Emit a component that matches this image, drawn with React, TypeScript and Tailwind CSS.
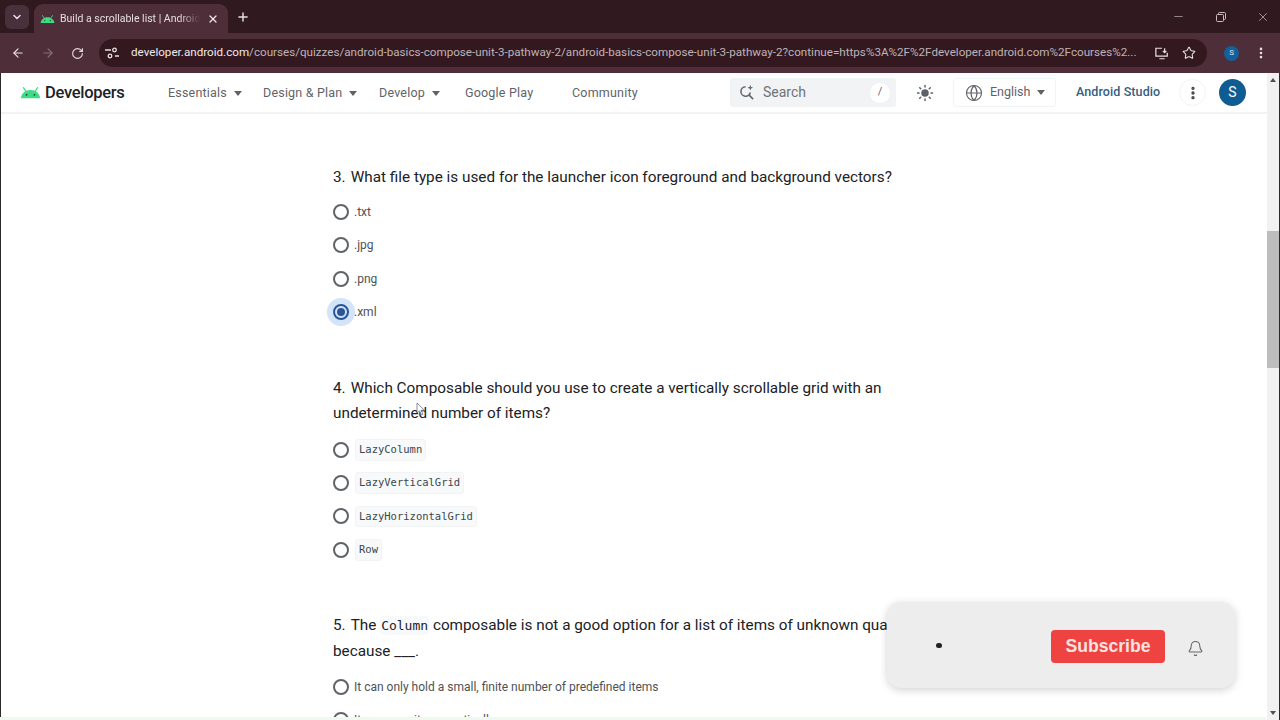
import React from 'react';
import { ArrowLeft, ArrowRight, RotateCw, Plus, X, ChevronDown, Star, MoreVertical, Globe, Minus, Bell, Sun } from 'lucide-react';

const AndroidLogo: React.FC<{ className?: string }> = ({ className }) => (
  <svg viewBox="0 0 24 14" className={className}>
    <path d="M1 13.5C1.6 8 6 4 12 4s10.400 4 11 9.500z" fill="#3ddc84" />
    <path d="M6.500 5.500 4 1.500M17.500 5.500 20 1.500" stroke="#3ddc84" strokeWidth="1.400" strokeLinecap="round" />
    <circle cx="7.500" cy="9.600" r="1" fill="#1f3a2a" />
    <circle cx="16.500" cy="9.600" r="1" fill="#1f3a2a" />
  </svg>
);

const Caret = () => <span className="ml-[7px] inline-block w-0 h-0 border-x-[4.5px] border-x-transparent border-t-[5px] border-t-[#5f6368]" />;

const NavItem: React.FC<{ label: string; caret?: boolean; width: string }> = ({ label, caret, width }) => (
  <div className={`flex items-center pt-[2px] text-[12.5px] tracking-[0.2px] text-[#5f6368] ${width}`}>
    {label}
    {caret && <Caret />}
  </div>
);

const Radio: React.FC<{ checked?: boolean }> = ({ checked }) => (
  <span className="relative flex-none w-[16px] h-[16px] rounded-full border-2 border-[#5f6368] flex items-center justify-center">
    {checked && (
      <>
        <span className="absolute -inset-[8px] rounded-full bg-[#d3e3f8]" />
        <span className="absolute -inset-[2px] rounded-full border-2 border-[#2a5699]" />
        <span className="relative w-[8px] h-[8px] rounded-full bg-[#2a5699]" />
      </>
    )}
  </span>
);

const Option: React.FC<{ label: string; code?: boolean; checked?: boolean }> = ({ label, code, checked }) => (
  <div className="flex items-center h-[17px] mb-[16.4px]">
    <Radio checked={checked} />
    {code ? (
      <code className="relative ml-[6px] px-[3px] py-[2px] rounded-[3px] bg-[#f8f9fa] border border-[#f1f3f4] text-[10.5px] text-[#37474f] font-['DejaVu_Sans_Mono',monospace]">{label}</code>
    ) : (
      <span className="relative ml-[5px] text-[12px] text-[#4e5256]">{label}</span>
    )}
  </div>
);

const Question: React.FC<{ n: number; children: React.ReactNode; className?: string }> = ({ n, children, className }) => (
  <h3 className={`text-[15.3px] leading-[25.5px] font-normal text-[#202124] ${className ?? ''}`}>
    <span className="mr-[5px]">{n}.</span>
    {children}
  </h3>
);

export default function App() {
  return (
    <div className="relative w-[1280px] h-[720px] overflow-hidden flex flex-col bg-white font-['Roboto',sans-serif]">
      {/* tab strip */}
      <div className="h-[33px] flex-none bg-[#30191f] flex items-end">
        <div className="w-[24px] h-[24px] ml-[5px] mb-[4px] rounded-md bg-[#49303a] flex items-center justify-center text-[#e8dfe2]">
          <ChevronDown size={12} strokeWidth={3} />
        </div>
        <div className="ml-[5px] w-[194px] h-[29px] rounded-t-[9px] bg-[#4e2f39] flex items-center pl-[6px] pr-[9px]">
          <AndroidLogo className="w-[15px] h-[10px] flex-none" />
          <span className="ml-[5px] w-[140px] text-[10.5px] text-[#e6dde0] whitespace-nowrap overflow-hidden [mask-image:linear-gradient(to_right,black_85%,transparent)]">Build a scrollable list | Android</span>
          <X size={12} strokeWidth={2.5} className="ml-auto text-[#eee6e9]" />
        </div>
        <Plus size={14} strokeWidth={2.5} className="ml-[8px] mb-[9px] text-[#e8dfe2]" />
        <div className="ml-auto flex items-center h-[33px] text-[#c9bfc3]">
          <Minus size={13} strokeWidth={1.2} className="mr-[31px]" />
          <svg viewBox="0 0 10 10" className="w-[10px] h-[10px] mr-[30px]" fill="none" stroke="currentColor" strokeWidth="1"><rect x="0.5" y="2.5" width="7" height="7" rx="1" /><path d="M2.500 2.500V1.500a1 1 0 0 1 1-1h5a1 1 0 0 1 1 1v5a1 1 0 0 1-1 1H7.500" /></svg>
          <X size={14} strokeWidth={1.2} className="mr-[10px]" />
        </div>
      </div>
      {/* toolbar */}
      <div className="h-[40px] flex-none bg-[#4e2f39] flex items-center text-[#e8dfe2]">
        <ArrowLeft size={14} strokeWidth={2} className="ml-[11px] flex-none" />
        <ArrowRight size={14} strokeWidth={2} className="ml-[16px] flex-none text-[#86707a]" />
        <RotateCw size={13} strokeWidth={2} className="ml-[16px] flex-none" />
        <div className="ml-[15px] w-[1108px] h-[28px] flex-none rounded-full bg-[#33191f] flex items-center">
          <svg viewBox="0 0 14 12" className="ml-[6px] w-[14px] h-[12px] flex-none" fill="none" stroke="#e8dfe2" strokeWidth="1.3"><path d="M0 3h6M10 9h4" /><circle cx="9.500" cy="3" r="1.800" /><circle cx="5" cy="9" r="1.800" /></svg>
          <span className="ml-[12px] w-[1012px] flex-none text-[11.65px] whitespace-nowrap text-[#bfb3b7]">
            <span className="text-[#f0e9eb]">developer.android.com</span>/courses/quizzes/android-basics-compose-unit-3-pathway-2/android-basics-compose-unit-3-pathway-2?continue=https%3A%2F%2Fdeveloper.android.com%2Fcourses%2...
          </span>
          <svg viewBox="0 0 16 14" className="ml-[12px] w-[14px] h-[13px] flex-none" fill="none" stroke="#e8dfe2" strokeWidth="1.400"><path d="M8 1H1v9h13V6M5 13h6M11 1v5M9 4l2 2 2-2" /></svg>
          <Star size={14} strokeWidth={1.8} className="ml-[13px] flex-none" />
        </div>
        <div className="ml-[17px] w-[15px] h-[15px] flex-none rounded-full bg-[#14609c] flex items-center justify-center text-[8px] text-[#dbe8f3]">S</div>
        <MoreVertical size={14} strokeWidth={2.5} className="ml-[15px] flex-none" />
      </div>
      <div className="flex-1 flex min-h-0">
        <div className="flex-1 min-w-0 flex flex-col border-l border-[#2a2a2a]">
          {/* site header */}
          <div className="h-[41px] flex-none flex items-center border-b-2 border-[#f1f3f4]">
            <AndroidLogo className="ml-[19px] w-[21px] h-[13px]" />
            <span className="ml-[4px] pt-[1px] text-[16.5px] font-medium tracking-[-0.3px] text-[#202124] w-[123px]">Developers</span>
            <NavItem label="Essentials" caret width="w-[95px]" />
            <NavItem label="Design & Plan" caret width="w-[116px]" />
            <NavItem label="Develop" caret width="w-[86px]" />
            <NavItem label="Google Play" width="w-[107px]" />
            <NavItem label="Community" width="w-[158px]" />
            <div className="w-[166px] h-[29px] flex items-center bg-[#f1f3f4] rounded-[3px]">
              <svg viewBox="0 0 18 18" className="ml-[8px] w-[17px] h-[17px]" fill="none" stroke="#5f6368" strokeWidth="1.6"><path d="M8 3a5 5 0 1 0 5 6M11 11l5 5" /><path d="M13 1l.8 2.200L16 4l-2.200.8L13 7l-.8-2.200L10 4l2.200-.8z" fill="#5f6368" stroke="none" /></svg>
              <span className="ml-[8px] text-[14px] text-[#6f7377]">Search</span>
              <span className="ml-auto mr-[6px] w-[20px] h-[20px] rounded-full bg-white flex items-center justify-center text-[11px] text-[#5f6368]">/</span>
            </div>
            <Sun size={18} strokeWidth={2} className="ml-[20px] text-[#5f6368] fill-[#5f6368]" />
            <div className="ml-[19px] w-[103px] h-[29px] border border-[#f1f3f4] rounded-[3px] flex items-center pl-[11px] text-[12.5px] text-[#5f6368]">
              <Globe size={18} strokeWidth={1.5} className="mr-[7px]" />
              English
              <Caret />
            </div>
            <span className="ml-[20px] w-[103px] text-[12.5px] tracking-[0.1px] font-medium text-[#33617f]">Android Studio</span>
            <div className="w-[27px] h-[27px] rounded-full border border-[#f1f3f4] flex items-center justify-center text-[#3c4043]">
              <MoreVertical size={16} strokeWidth={3} />
            </div>
            <div className="ml-[13px] w-[27px] h-[27px] rounded-full bg-[#0f5c92] flex items-center justify-center text-[14px] text-white">S</div>
          </div>
          {/* quiz page */}
          <div className="flex-1 min-h-0 overflow-hidden pl-[332px] pt-[51px]">
            <div className="w-[620px]">
              <Question n={3} className="mb-[13px]">What file type is used for the launcher icon foreground and background vectors?</Question>
              <Option label=".txt" />
              <Option label=".jpg" />
              <Option label=".png" />
              <Option label=".xml" checked />
              <Question n={4} className="mt-[55px] mb-[14.5px]">Which Composable should you use to create a vertically scrollable grid with an undetermined number of items?</Question>
              <Option label="LazyColumn" code />
              <Option label="LazyVerticalGrid" code />
              <Option label="LazyHorizontalGrid" code />
              <Option label="Row" code />
              <Question n={5} className="mt-[55px] mb-[14px]">
                The <code className="px-[1px] py-[2px] bg-[#f8f9fa] rounded-[3px] text-[13px] font-['DejaVu_Sans_Mono',monospace]">Column</code> composable is not a good option for a list of items of unknown quantity because ___.
              </Question>
              <Option label="It can only hold a small, finite number of predefined items" />
              <Option label="It arranges items vertically" />
            </div>
          </div>
        </div>
        {/* scrollbar */}
        <div className="w-[13px] flex-none flex">
          <div className="w-[12px] bg-[#f1f1f1] flex flex-col items-center">
            <span className="mt-[5px] w-0 h-0 border-x-[3.5px] border-x-transparent border-b-[4px] border-b-[#505050]" />
            <div className="mt-[149px] h-[137px] w-full bg-[#bdbdbd]" />
            <span className="mt-auto mb-[5px] w-0 h-0 border-x-[3.5px] border-x-transparent border-t-[4px] border-t-[#505050]" />
          </div>
          <div className="w-[1px] bg-[#2a2a2a]" />
        </div>
      </div>
      <div className="absolute left-0 right-[14px] bottom-0 h-[3px] bg-[#eef9f0]" />
      {/* mouse cursor */}
      <svg viewBox="0 0 10 14" className="absolute left-[416px] top-[402px] w-[10px] h-[14px]" fill="white" stroke="#6b7280" strokeWidth="0.8"><path d="M1 1v10l2.500-2.200L5.500 13l1.500-.7-2-4h3.500z" /></svg>
      {/* subscribe overlay */}
      <div className="absolute left-[887px] top-[602px] w-[348px] h-[86px] rounded-[14px] bg-[#ededed] shadow-[0_2px_8px_rgba(0,0,0,0.18)] flex items-center">
        <span className="ml-[49px] w-[6px] h-[5px] rounded-full bg-[#222222]" />
        <div className="ml-[109px] mt-[2px] w-[114px] h-[33px] rounded-[4px] bg-[#ee4340] flex items-center justify-center text-[17.6px] font-bold text-[#fbe3e1] font-['Liberation_Sans',sans-serif]">Subscribe</div>
        <Bell size={17} strokeWidth={1.5} className="ml-[22px] mt-[6px] text-[#666666]" />
      </div>
    </div>
  );
}
